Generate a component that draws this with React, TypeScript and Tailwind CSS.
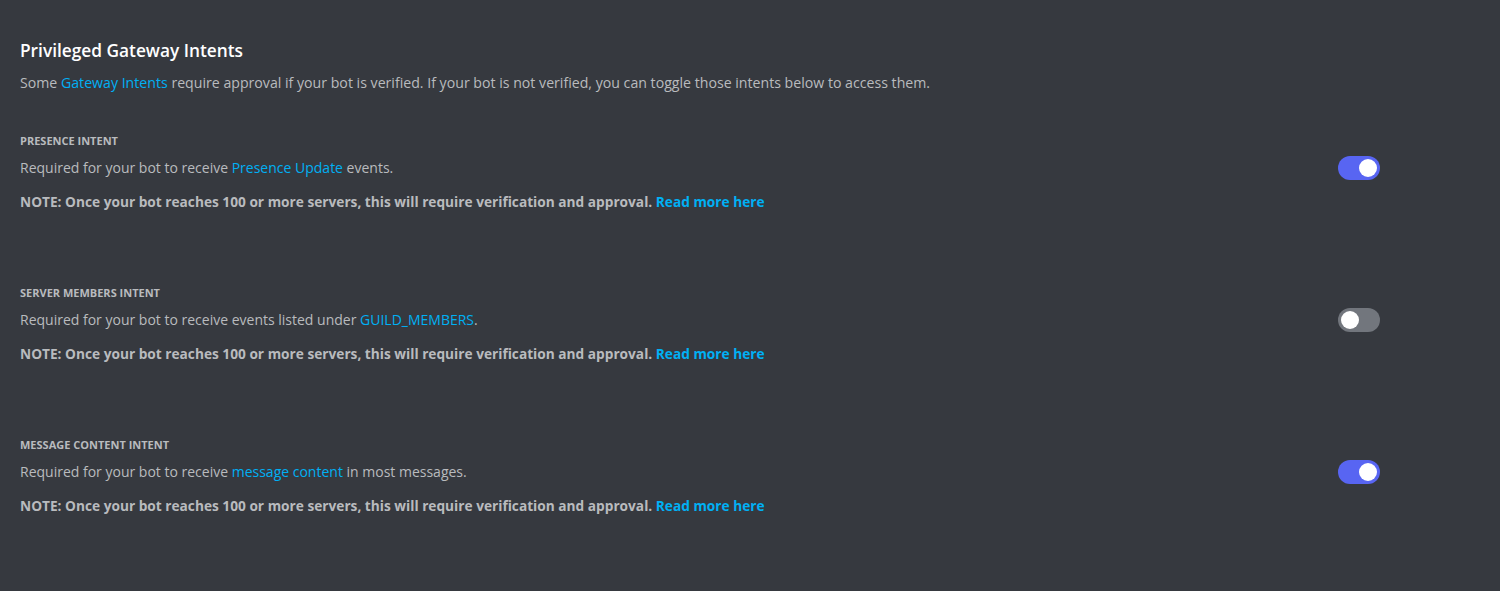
import { useState } from "react"

const link = "text-[#00b0f4]"

function Toggle({ on, onChange }: { on: boolean; onChange: () => void }) {
    return (
        <button
            onClick={onChange}
            className={`relative flex h-6 w-[42px] shrink-0 items-center rounded-full px-[3px] ${on ? "justify-end bg-[#5865f2]" : "justify-start bg-[#72767d]"}`}
        >
            <span className="h-[18px] w-[18px] rounded-full bg-white" />
        </button>
    )
}

interface IntentProps {
    label: string
    children: React.ReactNode
    defaultOn: boolean
}

function Intent({ label, children, defaultOn }: IntentProps) {
    const [on, setOn] = useState(defaultOn)
    return (
        <div className="h-[152px]">
            <div className="text-[11px] font-bold uppercase leading-4 text-[#b9bbbe]">{label}</div>
            <div className="mt-[7px] flex items-center justify-between">
                <div className="text-sm leading-6 text-[#b9bbbe]">{children}</div>
                <Toggle on={on} onChange={() => setOn(!on)} />
            </div>
            <div className="mt-3 text-[13.7px] font-bold leading-5 text-[#b9bbbe]">
                NOTE: Once your bot reaches 100 or more servers, this will require verification and approval.{" "}
                <a href="#" className={link}>Read more here</a>
            </div>
        </div>
    )
}

export default function App() {
    return (
        <div
            className="min-h-[591px] w-full bg-[#36393f] pl-5 pt-[39px]"
            style={{ fontFamily: '"Open Sans", "Noto Sans", sans-serif' }}
        >
            <div className="w-[1360px]">
                <h2 className="text-[17.3px] font-semibold leading-6 text-white">Privileged Gateway Intents</h2>
                <p className="mt-[10px] text-[14.15px] leading-5 text-[#b9bbbe]">
                    Some <a href="#" className={link}>Gateway Intents</a> require approval if your bot is verified. If your bot is not verified, you can toggle those intents below to access them.
                </p>
                <div className="mt-10">
                    <Intent label="Presence Intent" defaultOn>
                        Required for your bot to receive <a href="#" className={link}>Presence Update</a> events.
                    </Intent>
                    <Intent label="Server Members Intent" defaultOn={false}>
                        Required for your bot to receive events listed under <a href="#" className={link}>GUILD_MEMBERS</a>.
                    </Intent>
                    <Intent label="Message Content Intent" defaultOn>
                        Required for your bot to receive <a href="#" className={link}>message content</a> in most messages.
                    </Intent>
                </div>
            </div>
        </div>
    )
}
